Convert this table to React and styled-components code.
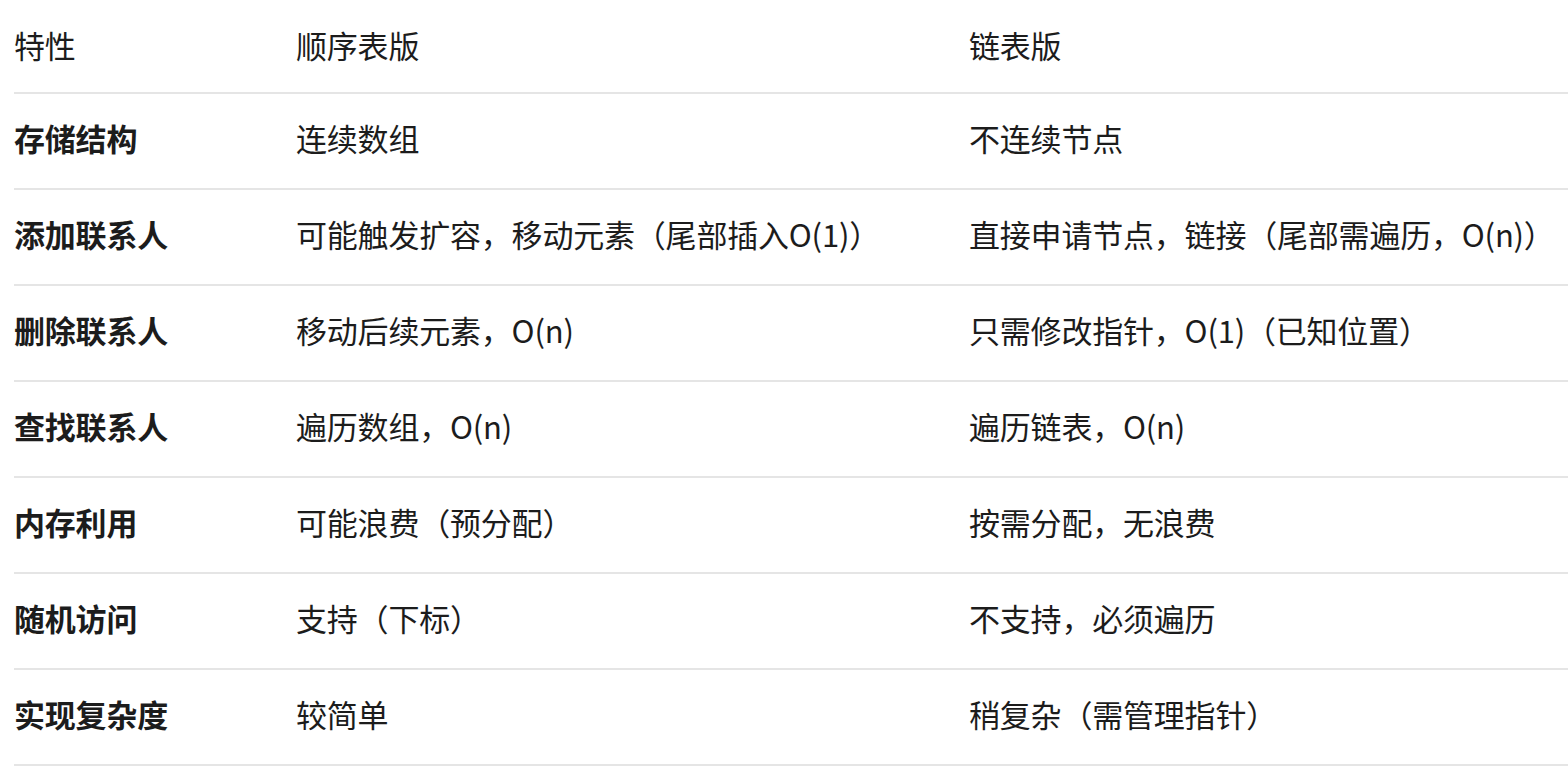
import styled, { createGlobalStyle } from 'styled-components'

const GlobalStyle = createGlobalStyle`
  html, body {
    margin: 0;
    padding: 0;
    background: #ffffff;
    overflow: hidden;
  }
  body {
    font-family: "Noto Sans CJK SC", "Noto Sans", sans-serif;
    color: #1c1c1c;
  }
`

const rows = [
  ['存储结构', '连续数组', '不连续节点'],
  ['添加联系人', '可能触发扩容，移动元素（尾部插入O(1)）', '直接申请节点，链接（尾部需遍历，O(n)）'],
  ['删除联系人', '移动后续元素，O(n)', '只需修改指针，O(1)（已知位置）'],
  ['查找联系人', '遍历数组，O(n)', '遍历链表，O(n)'],
  ['内存利用', '可能浪费（预分配）', '按需分配，无浪费'],
  ['随机访问', '支持（下标）', '不支持，必须遍历'],
  ['实现复杂度', '较简单', '稍复杂（需管理指针）'],
]

const Table = styled.div`
  margin-left: 14px;
  width: 1600px;
  display: flex;
  flex-direction: column;
`

const Row = styled.div`
  display: grid;
  grid-template-columns: 282px 673px 1fr;
  align-items: center;
  height: ${p => (p.$head ? '92px' : '94px')};
  border-bottom: 2px solid #e5e5e5;
`

const Cell = styled.div`
  font-size: 31px;
  line-height: 1;
  padding-bottom: ${p => (p.$head ? '4px' : '7px')};
  font-weight: ${p => (p.$bold ? 700 : 400)};
  white-space: nowrap;
  letter-spacing: -0.2px;
`

export default function App() {
  return (
    <>
      <GlobalStyle />
      <Table>
        <Row $head>
          <Cell $head>特性</Cell>
          <Cell $head>顺序表版</Cell>
          <Cell $head>链表版</Cell>
        </Row>
        {rows.map(([name, seq, linked]) => (
          <Row key={name}>
            <Cell $bold>{name}</Cell>
            <Cell>{seq}</Cell>
            <Cell>{linked}</Cell>
          </Row>
        ))}
      </Table>
    </>
  )
}
